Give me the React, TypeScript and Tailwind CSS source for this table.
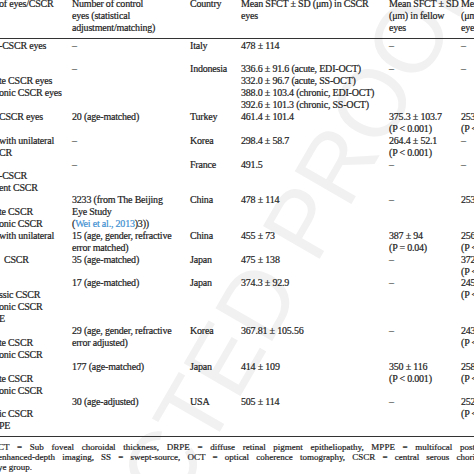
import React from "react";

type Cell = React.ReactNode[];
type Row = { c1: Cell; c2: Cell; c3: string; c4: Cell; c5: Cell; c6: Cell };

const Blue = ({ children }: { children: React.ReactNode }) => (
  <span className="text-[#3d8fd1] [-webkit-text-stroke:0.2px_#3d8fd1]">{children}</span>
);

const rows: Row[] = [
  { c1: ["-CSCR eyes", ""], c2: ["–"], c3: "Italy", c4: ["478 ± 114"], c5: ["–"], c6: ["–"] },
  {
    c1: ["", "te CSCR eyes", "onic CSCR eyes"],
    c2: ["–"],
    c3: "Indonesia",
    c4: [
      "336.6 ± 91.6 (acute, EDI-OCT)",
      "332.0 ± 96.7 (acute, SS-OCT)",
      "388.0 ± 103.4 (chronic, EDI-OCT)",
      "392.6 ± 101.3 (chronic, SS-OCT)",
    ],
    c5: ["–"],
    c6: ["–"],
  },
  {
    c1: ["CSCR eyes"],
    c2: ["20 (age-matched)"],
    c3: "Turkey",
    c4: ["461.4 ± 101.4"],
    c5: ["375.3 ± 103.7", "(P < 0.001)"],
    c6: ["253.4 ± 76.2", "(P < 0.001)"],
  },
  {
    c1: ["with unilateral", "CR"],
    c2: ["–"],
    c3: "Korea",
    c4: ["298.4 ± 58.7"],
    c5: ["264.4 ± 52.1", "(P < 0.001)"],
    c6: ["–"],
  },
  { c1: ["", "-CSCR", "ent CSCR"], c2: ["–"], c3: "France", c4: ["491.5"], c5: ["–"], c6: ["–"] },
  {
    c1: ["", "te CSCR", "onic CSCR"],
    c2: [
      "3233 (from The Beijing",
      "Eye Study",
      <>
        (<Blue>Wei et al., 2013</Blue>)3))
      </>,
    ],
    c3: "China",
    c4: ["478 ± 114"],
    c5: ["–"],
    c6: ["253 ± 105"],
  },
  {
    c1: ["with unilateral"],
    c2: ["15 (age, gender, refractive", "error matched)"],
    c3: "China",
    c4: ["455 ± 73"],
    c5: ["387 ± 94", "(P = 0.04)"],
    c6: ["256 ± 86", "(P < 0.001)"],
  },
  {
    c1: [<span className="pl-[5px]">CSCR</span>],
    c2: ["35 (age-matched)"],
    c3: "Japan",
    c4: ["475 ± 138"],
    c5: ["–"],
    c6: ["372 ± 107", "(P < 0.001)"],
  },
  {
    c1: ["", "ssic CSCR", "onic CSCR", "E"],
    c2: ["17 (age-matched)"],
    c3: "Japan",
    c4: ["374.3 ± 92.9"],
    c5: ["–"],
    c6: ["245.3 ± 82.5", "(P < 0.001)"],
  },
  {
    c1: ["", "te CSCR", "onic CSCR"],
    c2: ["29 (age, gender, refractive", "error adjusted)"],
    c3: "Korea",
    c4: ["367.81 ± 105.56"],
    c5: ["–"],
    c6: ["243.08 ± 85.09", "(P < 0.001)"],
  },
  {
    c1: ["", "te CSCR", "onic CSCR"],
    c2: ["177 (age-matched)"],
    c3: "Japan",
    c4: ["414 ± 109"],
    c5: ["350 ± 116", "(P < 0.001)"],
    c6: ["258 ± 81", "(P < 0.001)"],
  },
  {
    c1: ["", "ic CSCR", "PE"],
    c2: ["30 (age-adjusted)"],
    c3: "USA",
    c4: ["505 ± 114"],
    c5: ["–"],
    c6: ["252 ± 68", "(P < 0.001)"],
  },
];

function Lines({ lines, first }: { lines: Cell; first?: boolean }) {
  return (
    <div className={first ? "flex flex-col -ml-[1px]" : "flex flex-col"}>
      {lines.map((l, i) => (
        <div key={i} className="h-[11.9px] whitespace-nowrap leading-[11.9px]">
          {l === "" ? "\u00a0" : l}
        </div>
      ))}
    </div>
  );
}

const GRID = "grid grid-cols-[72px_118px_51px_148px_72px_100px]";

export default function App() {
  return (
    <div className="relative h-[474px] w-[474px] overflow-hidden bg-white font-['Liberation_Serif',serif] text-[#1c1c1c]">
      <div className="pointer-events-none absolute left-[215px] top-[375px] -translate-x-1/2 -translate-y-1/2 rotate-[-60deg] whitespace-nowrap font-['Liberation_Sans',sans-serif] text-[95px] leading-none text-[#f1f1f1]">
        CORRECTED PROOF
      </div>
      <div className="relative -mt-[2px] text-[10px] leading-[11.9px] tracking-[-0.2px] [-webkit-text-stroke:0.2px_#1c1c1c]">
        <div className={GRID + " border-b border-[#333] pb-[4px]"}>
          <Lines first lines={["of eyes/CSCR"]} />
          <Lines lines={["Number of control", "eyes (statistical", "adjustment/matching)"]} />
          <Lines lines={["Country"]} />
          <Lines lines={["Mean SFCT ± SD (μm) in CSCR", "eyes"]} />
          <Lines lines={["Mean SFCT ± SD", "(μm) in fellow", "eyes"]} />
          <Lines lines={["Mean SFCT ± SD", "(μm) in control", "eyes"]} />
        </div>
        <div className="border-b border-[#333] pb-[4px] pt-px">
          {rows.map((r, i) => (
            <div key={i} className={GRID}>
              <Lines first lines={r.c1} />
              <Lines lines={r.c2} />
              <Lines lines={[r.c3]} />
              <Lines lines={r.c4} />
              <Lines lines={r.c5} />
              <Lines lines={r.c6} />
            </div>
          ))}
        </div>
        <div className="-ml-[2px] pt-[5px] text-[9px] leading-[10px] tracking-normal">
          <div className="w-[477px] text-justify [text-align-last:justify]">
            CT = Sub foveal choroidal thickness, DRPE = diffuse retinal pigment epitheliopathy, MPPE = multifocal post
          </div>
          <div className="w-[477px] text-justify [text-align-last:justify]">
            enhanced-depth imaging, SS = swept-source, OCT = optical coherence tomography, CSCR = central serous chori
          </div>
          <div className="whitespace-nowrap">ye group.</div>
        </div>
      </div>
    </div>
  );
}
